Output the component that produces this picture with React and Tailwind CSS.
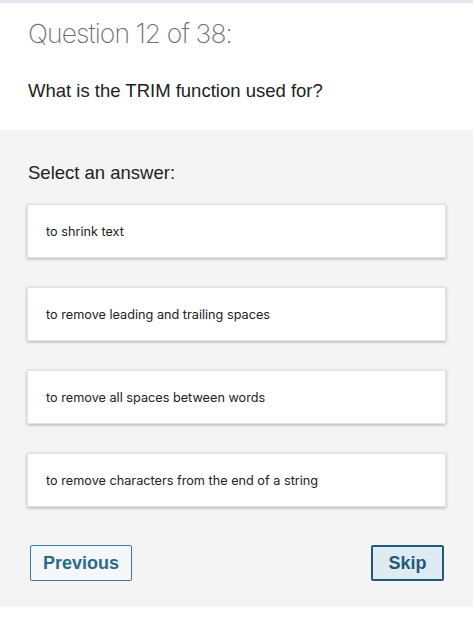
export default function App() {
  const answers = [
    "to shrink text",
    "to remove leading and trailing spaces",
    "to remove all spaces between words",
    "to remove characters from the end of a string",
  ];
  return (
    <div className="w-[473px] h-[640px] bg-white flex flex-col" style={{ fontFamily: '"Liberation Sans", Arial, sans-serif' }}>
      <div className="h-[3px] bg-[#e3e7ef]" />
      <div className="px-[28px] pt-[14px] h-[127px]">
        <h1 className="text-[26.5px] leading-[32px] font-extralight text-[#6f6f6f] tracking-[-0.9px]" style={{ fontFamily: 'Inter, Roboto, "Liberation Sans", sans-serif' }}>
          Question 12 of 38:
        </h1>
        <p className="mt-[30px] text-[18.5px] leading-[24px] text-[#222]">What is the TRIM function used for?</p>
      </div>
      <div className="bg-[#f4f4f4] h-[477px] px-[27px] pt-[31px]">
        <p className="text-[18.5px] leading-[24px] text-[#222] pl-[1px]">Select an answer:</p>
        <div className="mt-[19px] flex flex-col gap-[29px] w-[419px]">
          {answers.map((a) => (
            <div key={a} className="h-[54px] bg-white border border-[#e2e2e2] shadow-[0_1px_3px_rgba(0,0,0,0.28)] flex items-center pl-[18px] pt-[2px] text-[12.7px] text-[#222]" style={{ fontFamily: 'Inter, "Liberation Sans", sans-serif' }}>
              {a}
            </div>
          ))}
        </div>
        <div className="mt-[38px] flex justify-between pl-[3px] pr-[2px]">
          <button className="h-[36px] w-[102px] border border-[#3c7a96] bg-[#f5f8fa] rounded-[2px] text-[18px] font-bold text-[#2a6b8a]">
            Previous
          </button>
          <button className="h-[36px] w-[73px] border-2 border-[#1f5b79] bg-[#dfebf2] rounded-[2px] text-[18px] font-bold text-[#1f5b79]">
            Skip
          </button>
        </div>
      </div>
    </div>
  );
}
